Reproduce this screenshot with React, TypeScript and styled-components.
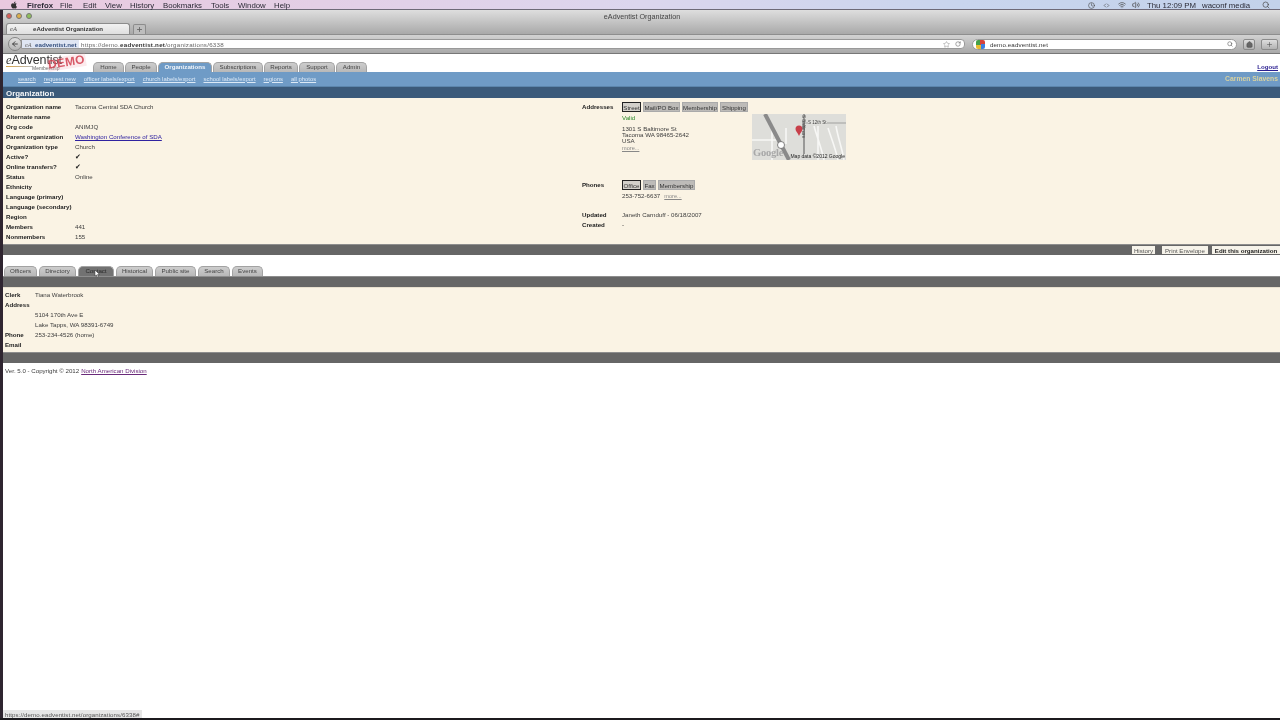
import React from "react";
import styled, { createGlobalStyle } from "styled-components";
import { FaApple } from "react-icons/fa";
import { Clock, Wifi, Volume2, Search, Star, RotateCw, House, ArrowLeft, Plus, ChevronsLeftRight } from "lucide-react";

const Global = createGlobalStyle`
  html, body { margin: 0; padding: 0; width: 1280px; height: 720px; overflow: hidden; background: #2f2530; }
  body { font-family: "Liberation Sans", Arial, sans-serif; color: #222; }
  #root { width: 1280px; height: 720px; }
  * { box-sizing: border-box; }
`;

const Screen = styled.div`
  width: 1280px; height: 720px; display: flex; flex-direction: column; filter: blur(0.4px); background: #2f2530;
`;
const MenuBar = styled.div`
  height: 10px; display: flex; align-items: center; padding: 1px 10px 0 10px; font-size: 7.8px; color: #2a2a35;
  background: linear-gradient(90deg, #e9c9df 0%, #e3cfe6 25%, #dcd6ee 50%, #c9d5ee 75%, #c3d2ea 100%);
  border-bottom: 1px solid #6e6a78;
`;
const AppleMark = styled.span`display: flex; width: 17px; font-size: 8px; color: #333;`;
const MenuItem = styled.span<{ $w: number; $bold?: boolean }>`
  width: ${p => p.$w}px; font-weight: ${p => (p.$bold ? 700 : 400)}; white-space: nowrap;
`;
const Spacer = styled.div`flex: 1;`;
const TrayIcon = styled.span<{ $w: number }>`width: ${p => p.$w}px; display: flex; color: #444;`;

const TitleBar = styled.div`
  height: 24px; margin-left: 3px; display: flex; flex-direction: column;
  background: linear-gradient(180deg, #dedede 0%, #a9a9a9 100%);
`;
const TitleTop = styled.div`height: 12px; display: flex; align-items: center; padding-left: 3px; gap: 4px;`;
const Light = styled.span<{ $c: string }>`width: 6px; height: 6px; border-radius: 50%; background: ${p => p.$c}; border: 0.5px solid #777;`;
const WindowTitle = styled.span`flex: 1; text-align: center; font-size: 7.2px; color: #444; padding-right: 32px;`;
const TabStrip = styled.div`height: 12px; display: flex; align-items: flex-end; padding-left: 3px; gap: 3px;`;
const BrowserTab = styled.div`
  width: 124px; height: 11px; display: flex; align-items: center; font-size: 6.1px; font-weight: 700; color: #333; padding-bottom: 1px;
  background: linear-gradient(180deg, #f2f2f2, #dfdfdf); border: 1px solid #8c8c8c; border-bottom: 0; border-radius: 3px 3px 0 0;
`;
const TabFav = styled.span`width: 26px; padding-left: 3px; font-family: "Liberation Serif", serif; font-weight: 400; font-style: italic; color: #555; font-size: 6.5px;`;
const NewTab = styled.div`
  width: 13px; height: 10px; display: flex; align-items: center; justify-content: center; color: #666;
  background: #bdbdbd; border: 1px solid #8c8c8c; border-bottom: 0; border-radius: 2px 2px 0 0;
`;

const Toolbar = styled.div`
  height: 20px; margin-left: 3px; display: flex; align-items: center; padding: 0 2px 0 5px;
  background: linear-gradient(180deg, #d2d2d2, #a9a9a9); border-top: 1px solid #8e8e8e; border-bottom: 1px solid #777;
`;
const BackButton = styled.div`
  width: 14px; height: 14px; flex: none; border-radius: 50%; display: flex; align-items: center; justify-content: center;
  background: linear-gradient(180deg, #e0e0e0, #b5b5b5); border: 1px solid #858585; color: #444; z-index: 1;
`;
const UrlBar = styled.div`
  width: 944px; height: 10px; flex: none; margin-left: -1px; background: #fff; display: flex; align-items: center; font-size: 6.2px; color: #666;
  border: 0.5px solid #999; border-radius: 0 4px 4px 0;
`;
const Identity = styled.span`
  width: 57px; height: 100%; padding-left: 3px; display: flex; align-items: center; gap: 2px; background: #dfe6f3; color: #35507f; font-weight: 700; margin-right: 2px; white-space: nowrap;
`;
const IdentityFav = styled.span`font-family: "Liberation Serif", serif; font-style: italic; font-weight: 400; color: #666; width: 8px;`;
const UrlText = styled.span`letter-spacing: 0.25px; white-space: nowrap;`;
const UrlStrong = styled.b`color: #333;`;
const UrlIcons = styled.span`margin-left: auto; display: flex; align-items: center; gap: 5px; padding-right: 3px; color: #999;`;
const SearchBar = styled.div`
  width: 265px; height: 11px; flex: none; margin-left: 7px; background: #fff; border: 0.5px solid #999; border-radius: 6px; display: flex; align-items: center; padding: 0 3px; font-size: 6.2px; color: #333; gap: 2px; letter-spacing: 0.12px;
`;
const EngineIcon = styled.span`
  width: 9px; height: 9px; border-radius: 2px; margin-right: 3px;
  background: conic-gradient(#d8423a 0 25%, #3d7ee0 25% 50%, #e8bd30 50% 75%, #45a04a 75%);
`;
const ToolButton = styled.div<{ $w: number; $ml: number }>`
  width: ${p => p.$w}px; height: 11px; flex: none; margin-left: ${p => p.$ml}px; display: flex; align-items: center; justify-content: center; color: #555;
  background: linear-gradient(180deg, #dedede, #b2b2b2); border: 1px solid #8b8b8b; border-radius: 2px;
`;

const Page = styled.div`flex: 1; margin-left: 3px; background: #fff; display: flex; flex-direction: column; min-height: 0; font-size: 6.15px;`;
const Header = styled.div`height: 18px; display: flex; align-items: flex-end; position: relative; padding-left: 90px;`;
const Logo = styled.div`position: absolute; left: 0; top: 0; width: 84px; height: 18px;`;
const LogoWord = styled.span`position: absolute; left: 3px; top: 0; font-size: 12.5px; line-height: 12px; color: #333; letter-spacing: -0.1px;`;
const LogoE = styled.i`font-family: "Liberation Serif", serif;`;
const LogoSub = styled.span`position: absolute; left: 29px; top: 11px; font-size: 5px; color: #666;`;
const LogoLine = styled.span`position: absolute; left: 3px; top: 12px; width: 26px; height: 1px; background: linear-gradient(90deg, #d9a347, #bbb);`;
const Demo = styled.span`
  position: absolute; left: 44px; top: 2px; font-size: 12px; font-weight: 700; line-height: 13px; letter-spacing: 0.2px; color: #d23c4c; background: rgba(240,170,180,0.28);
  padding: 0 1px; transform: rotate(-9deg); opacity: 0.85;
`;
const TabRow = styled.div<{ $pl?: number; $gap: number }>`display: flex; align-items: flex-end; height: 10px; gap: ${p => p.$gap}px; padding-left: ${p => p.$pl ?? 0}px;`;
const PageTab = styled.div<{ $w: number; $state?: "blue" | "dark" }>`
  width: ${p => p.$w}px; height: 10px; display: flex; align-items: center; justify-content: center; white-space: nowrap; padding-bottom: 2px;
  border-radius: 5px 5px 0 0; border: 0.5px solid #a2a2a2; border-bottom: 0;
  color: ${p => (p.$state === "blue" ? "#f1f5fa" : p.$state === "dark" ? "#2a2a2a" : "#444")}; font-weight: ${p => (p.$state === "blue" ? 700 : 400)};
  background: ${p => p.$state === "blue" ? "#6f9bc6" : p.$state === "dark" ? "#727272" : "linear-gradient(180deg, #cdcdcd, #b8b8b8)"};
`;
const TabLabel = styled.span`position: relative;`;
const Cursor = styled.svg`position: absolute; left: 9px; top: 3px; width: 6px; height: 8px;`;
const SubNav = styled.div`
  height: 15px; background: #6f9bc6; display: flex; align-items: center; padding: 0 2px 1px 15px; gap: 8px; font-size: 5.9px;
  border-bottom: 1px solid #5c86ad;
`;
const SubLink = styled.a`color: #dce9f6; text-decoration: underline; white-space: nowrap;`;
const UserName = styled.span`margin-left: auto; color: #d8d2a0; font-weight: 700; font-size: 6.8px;`;
const Logout = styled.a`position: absolute; right: 2px; bottom: 2px; color: #2a1e90; font-weight: 700; text-decoration: underline;`;
const SectionHead = styled.div`height: 11px; background: #3b5a7a; color: #f4f6f8; font-size: 7.9px; font-weight: 700; display: flex; align-items: center; padding: 1px 0 0 3px;`;
const Cream = styled.div`background: #faf3e4; display: flex;`;
const OrgPanel = styled(Cream)`height: 146px; padding: 3px 0 0 3px; border-top: 1px solid #faf3e4;`;
const LeftCol = styled.div`width: 576px;`;
const Row = styled.div`height: 10px; line-height: 10px; display: flex; white-space: nowrap;`;
const Label = styled.b<{ $w: number }>`width: ${p => p.$w}px; flex: none; color: #222;`;
const Value = styled.span`color: #3c3c3c;`;
const Check = styled.span`color: #222; font-size: 7px; font-family: "DejaVu Sans", sans-serif;`;
const PurpleLink = styled.a`color: #2f22a0; text-decoration: underline;`;
const RightCol = styled.div`flex: 1; display: flex; flex-direction: column;`;
const BlockRow = styled.div<{ $h: number }>`display: flex; height: ${p => p.$h}px;`;
const BlockLabel = styled.b`width: 40px; flex: none; height: 10px; line-height: 10px; color: #222;`;
const BlockBody = styled.div`flex: 1; display: flex; flex-direction: column;`;
const MiniTabs = styled.div`display: flex; gap: 2px; height: 10px;`;
const MiniTab = styled.div<{ $w: number; $on?: boolean }>`
  width: ${p => p.$w}px; height: 10px; display: flex; align-items: center; justify-content: center; white-space: nowrap; color: #333;
  background: ${p => (p.$on ? "#d3d0ca" : "#bdbbb8")}; border: ${p => (p.$on ? "1px solid #222" : "0.5px solid #aaa")};
`;
const AddressWrap = styled.div`display: flex; margin-top: 2px;`;
const AddressText = styled.div`width: 130px; line-height: 6px;`;
const Valid = styled.div`color: #2d8a2a; height: 6px; margin-bottom: 5px; line-height: 7px;`;
const AddrLines = styled.div`padding-top: 1px; color: #3c3c3c; line-height: 6px;`;
const More = styled.a`color: #888; text-decoration: underline; font-size: 5.6px;`;
const MoreBlock = styled.div`line-height: 8px;`;
const MapBox = styled.div`width: 94px; height: 46px; position: relative; overflow: hidden; background: #e0e0dc;`;
const MapSvg = styled.svg`display: block; width: 94px; height: 46px;`;
const MapData = styled.span`position: absolute; right: 1px; bottom: 1px; font-size: 5px; color: #222; line-height: 6px; white-space: nowrap;`;
const MapLogo = styled.span`position: absolute; left: 1px; bottom: 2px; font-size: 10.5px; line-height: 10px; color: #a8a8a8; font-family: "Liberation Serif", serif; font-weight: 700; letter-spacing: -0.2px;`;
const MapTextV = styled.span`position: absolute; left: 49px; top: 1px; font-size: 4.5px; writing-mode: vertical-rl; color: #444;`;
const MapTextH = styled.span`position: absolute; left: 56px; top: 6px; font-size: 4.5px; color: #444; background: #e0e0dc;`;
const PhoneLine = styled.div`height: 10px; display: flex; align-items: center; gap: 4px; color: #3c3c3c; margin-top: 1px; line-height: 8px;`;
const GreyBar = styled.div`height: 11px; background: #666; display: flex; align-items: center; justify-content: flex-end; border-top: 1px solid #8d8d8d;`;
const ActionBtn = styled.div<{ $w: number; $mr: number; $strong?: boolean }>`
  width: ${p => p.$w}px; height: 8px; margin-right: ${p => p.$mr}px; background: #f6f3ea; display: flex; align-items: center; justify-content: center; white-space: nowrap;
  font-weight: ${p => (p.$strong ? 700 : 400)}; color: ${p => (p.$strong ? "#222" : "#555")};
`;
const TabZone = styled.div`height: 21px; display: flex; align-items: flex-end;`;
const ContactPanel = styled(Cream)`height: 65px; padding: 2px 0 0 2px; flex-direction: column; border-top: 1px solid #e8e0cf;`;
const Footer = styled.div`height: 15px; padding-left: 2px; display: flex; align-items: center; gap: 2px; color: #3c3c3c;`;
const FooterLink = styled.a`color: #6a2a7a; text-decoration: underline;`;
const Fill = styled.div`flex: 1;`;
const Status = styled.div`
  align-self: flex-start; height: 8px; width: 139px; background: #e6e6e6; color: #555; font-size: 6.1px; display: flex; align-items: center; padding-left: 2px; letter-spacing: 0.1px; white-space: nowrap;
`;
const BottomEdge = styled.div`height: 2px; background: #1c1a1e;`;

const menus: [string, number, boolean?][] = [["Firefox", 33, true], ["File", 23], ["Edit", 22], ["View", 25], ["History", 33], ["Bookmarks", 48], ["Tools", 27], ["Window", 36], ["Help", 20]];
const topTabs: [string, number, ("blue")?][] = [["Home", 30], ["People", 32], ["Organizations", 54, "blue"], ["Subscriptions", 50], ["Reports", 34], ["Support", 36], ["Admin", 31]];
const lowTabs: [string, number][] = [["Officers", 33], ["Directory", 37], ["Contact", 36], ["Historical", 37], ["Public site", 41], ["Search", 32], ["Events", 31]];
const subLinks = ["search", "request new", "officer labels/export", "church labels/export", "school labels/export", "regions", "all photos"];

export default function App() {
  return (
    <Screen>
      <Global />
      <MenuBar>
        <AppleMark><FaApple /></AppleMark>
        {menus.map(([m, w, b]) => <MenuItem key={m} $w={w} $bold={b}>{m}</MenuItem>)}
        <Spacer />
        <TrayIcon $w={15}><Clock size={7} /></TrayIcon>
        <TrayIcon $w={15}><ChevronsLeftRight size={7} /></TrayIcon>
        <TrayIcon $w={14}><Wifi size={8} /></TrayIcon>
        <TrayIcon $w={15}><Volume2 size={8} /></TrayIcon>
        <MenuItem $w={55}>Thu 12:09 PM</MenuItem>
        <MenuItem $w={60}>waconf media</MenuItem>
        <TrayIcon $w={8}><Search size={8} /></TrayIcon>
      </MenuBar>
      <TitleBar>
        <TitleTop>
          <Light $c="#d9605a" /><Light $c="#dcb04c" /><Light $c="#8fbf5c" />
          <WindowTitle>eAdventist Organization</WindowTitle>
        </TitleTop>
        <TabStrip>
          <BrowserTab><TabFav>eA</TabFav>eAdventist Organization</BrowserTab>
          <NewTab><Plus size={7} strokeWidth={3} /></NewTab>
        </TabStrip>
      </TitleBar>
      <Toolbar>
        <BackButton><ArrowLeft size={8} strokeWidth={3} /></BackButton>
        <UrlBar>
          <Identity><IdentityFav>eA</IdentityFav>eadventist.net</Identity>
          <UrlText>https://demo.<UrlStrong>eadventist.net</UrlStrong>/organizations/6338</UrlText>
          <UrlIcons><Star size={7} /><RotateCw size={6} color="#555" /></UrlIcons>
        </UrlBar>
        <SearchBar>
          <EngineIcon />
          demo.eadventist.net
          <Spacer />
          <Search size={6} color="#444" />
        </SearchBar>
        <ToolButton $w={12} $ml={6}><House size={7} fill="#666" /></ToolButton>
        <ToolButton $w={17} $ml={6}><Plus size={7} /></ToolButton>
      </Toolbar>
      <Page>
        <Header>
          <Logo>
            <LogoWord><LogoE>e</LogoE>Adventist</LogoWord>
            <LogoLine />
            <LogoSub>Membership</LogoSub>
            <Demo>DEMO</Demo>
          </Logo>
          <TabRow $gap={1}>
            {topTabs.map(([t, w, s], i) => <PageTab key={t} $w={i === 0 ? w + 1 : w} $state={s}>{t}</PageTab>)}
          </TabRow>
          <Logout>Logout</Logout>
        </Header>
        <SubNav>
          {subLinks.map(l => <SubLink key={l}>{l}</SubLink>)}
          <UserName>Carmen Slavens</UserName>
        </SubNav>
        <SectionHead>Organization</SectionHead>
        <OrgPanel>
          <LeftCol>
            <Row><Label $w={69}>Organization name</Label><Value>Tacoma Central SDA Church</Value></Row>
            <Row><Label $w={69}>Alternate name</Label></Row>
            <Row><Label $w={69}>Org code</Label><Value>ANIMJQ</Value></Row>
            <Row><Label $w={69}>Parent organization</Label><PurpleLink>Washington Conference of SDA</PurpleLink></Row>
            <Row><Label $w={69}>Organization type</Label><Value>Church</Value></Row>
            <Row><Label $w={69}>Active?</Label><Check>✔</Check></Row>
            <Row><Label $w={69}>Online transfers?</Label><Check>✔</Check></Row>
            <Row><Label $w={69}>Status</Label><Value>Online</Value></Row>
            <Row><Label $w={69}>Ethnicity</Label></Row>
            <Row><Label $w={69}>Language (primary)</Label></Row>
            <Row><Label $w={69}>Language (secondary)</Label></Row>
            <Row><Label $w={69}>Region</Label></Row>
            <Row><Label $w={69}>Members</Label><Value>441</Value></Row>
            <Row><Label $w={69}>Nonmembers</Label><Value>155</Value></Row>
          </LeftCol>
          <RightCol>
            <BlockRow $h={78}>
              <BlockLabel>Addresses</BlockLabel>
              <BlockBody>
                <MiniTabs>
                  <MiniTab $w={19} $on>Street</MiniTab>
                  <MiniTab $w={37}>Mail/PO Box</MiniTab>
                  <MiniTab $w={36}>Membership</MiniTab>
                  <MiniTab $w={28}>Shipping</MiniTab>
                </MiniTabs>
                <AddressWrap>
                  <AddressText>
                    <Valid>Valid</Valid>
                    <AddrLines>1301 S Baltimore St<br />Tacoma WA 98465-2642<br />USA</AddrLines>
                    <MoreBlock><More>more...</More></MoreBlock>
                  </AddressText>
                  <MapBox>
                    <MapSvg viewBox="0 0 94 46">
                      <rect width="94" height="46" fill="#dededa" />
                      <path d="M0 26H28M20 14V46M34 14V30M66 12V46M62 12C66 26 70 36 72 46M76 14C80 26 84 36 86 46M84 12C86 24 90 34 92 46" stroke="#f7f7f5" strokeWidth="1.6" fill="none" />
                      <path d="M52 0V40" stroke="#555" strokeWidth="1" fill="none" />
                      <path d="M52 9H94" stroke="#777" strokeWidth="0.6" fill="none" />
                      <path d="M13 0 L37 46" stroke="#8a8a8a" strokeWidth="4" fill="none" />
                      <circle cx="29" cy="31" r="3.5" fill="#fff" stroke="#555" strokeWidth="0.7" />
                      <path d="M43.5 15 a3.5 3.5 0 1 1 7 0 c0 2.5 -2.5 4 -3.5 7 c-1 -3 -3.5 -4.5 -3.5 -7z" fill="#c8404a" />
                    </MapSvg>
                    <MapTextV>S Baltimore</MapTextV>
                    <MapTextH>S 12th St</MapTextH>
                    <MapLogo>Google</MapLogo>
                    <MapData>Map data ©2012 Google</MapData>
                  </MapBox>
                </AddressWrap>
              </BlockBody>
            </BlockRow>
            <BlockRow $h={30}>
              <BlockLabel>Phones</BlockLabel>
              <BlockBody>
                <MiniTabs>
                  <MiniTab $w={19} $on>Office</MiniTab>
                  <MiniTab $w={13}>Fax</MiniTab>
                  <MiniTab $w={37}>Membership</MiniTab>
                </MiniTabs>
                <PhoneLine>253-752-6637 <More>more...</More></PhoneLine>
              </BlockBody>
            </BlockRow>
            <Row><Label $w={40}>Updated</Label><Value>Janeth Carnduff - 06/18/2007</Value></Row>
            <Row><Label $w={40}>Created</Label><Value>-</Value></Row>
          </RightCol>
        </OrgPanel>
        <GreyBar>
          <ActionBtn $w={23} $mr={7}>History</ActionBtn>
          <ActionBtn $w={46} $mr={4}>Print Envelope</ActionBtn>
          <ActionBtn $w={68} $mr={0} $strong>Edit this organization</ActionBtn>
        </GreyBar>
        <TabZone>
          <TabRow $pl={1} $gap={2}>
            {lowTabs.map(([t, w]) => (
              <PageTab key={t} $w={w} $state={t === "Contact" ? "dark" : undefined}>
                <TabLabel>
                  {t}
                  {t === "Contact" && (
                    <Cursor viewBox="0 0 6 8"><path d="M1 0 L1 6 L2.5 5 L3.5 7.5 L4.5 7 L3.5 4.6 L5.5 4.4 Z" fill="#fff" stroke="#333" strokeWidth="0.5" /></Cursor>
                  )}
                </TabLabel>
              </PageTab>
            ))}
          </TabRow>
        </TabZone>
        <GreyBar />
        <ContactPanel>
          <Row><Label $w={30}>Clerk</Label><Value>Tiana Waterbrook</Value></Row>
          <Row><Label $w={30}>Address</Label></Row>
          <Row><Label $w={30} /><Value>5104 170th Ave E</Value></Row>
          <Row><Label $w={30} /><Value>Lake Tapps, WA 98391-6749</Value></Row>
          <Row><Label $w={30}>Phone</Label><Value>253-234-4526 (home)</Value></Row>
          <Row><Label $w={30}>Email</Label></Row>
        </ContactPanel>
        <GreyBar />
        <Footer>Ver. 5.0 - Copyright © 2012 <FooterLink>North American Division</FooterLink></Footer>
        <Fill />
        <Status>https://demo.eadventist.net/organizations/6338#</Status>
      </Page>
      <BottomEdge />
    </Screen>
  );
}
